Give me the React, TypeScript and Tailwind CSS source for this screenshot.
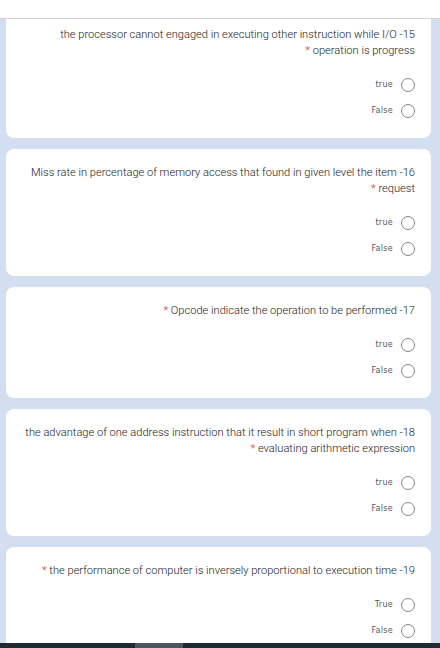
import React from 'react';

type Question = {
  lines: React.ReactNode[];
  options: string[];
  first?: boolean;
};

const Star = () => <span className="text-[#d93025]">*</span>;

const questions: Question[] = [
  {
    first: true,
    lines: [
      'the processor cannot engaged in executing other instruction while I/O -15',
      <><Star /> operation is progress</>,
    ],
    options: ['true', 'False'],
  },
  {
    lines: [
      'Miss rate in percentage of memory access that found in given level the item -16',
      <><Star /> request</>,
    ],
    options: ['true', 'False'],
  },
  {
    lines: [<><Star /> Opcode indicate the operation to be performed -17</>],
    options: ['true', 'False'],
  },
  {
    lines: [
      'the advantage of one address instruction that it result in short program when -18',
      <><Star /> evaluating arithmetic expression</>,
    ],
    options: ['true', 'False'],
  },
  {
    lines: [<><Star /> the performance of computer is inversely proportional to execution time -19</>],
    options: ['True', 'False'],
  },
];

function Radio({ label }: { label: string }) {
  return (
    <div className="flex h-[26px] items-center justify-end gap-[8px]">
      <span className="text-[8px] text-[#55595e] font-['DejaVu_Sans',sans-serif] tracking-[0.3px]">{label}</span>
      <span className="h-[14px] w-[14px] rounded-full border border-[#80868b]" />
    </div>
  );
}

function QuestionCard({ q }: { q: Question }) {
  return (
    <div
      className={
        q.first
          ? 'bg-white rounded-b-lg pt-[8px] pb-[14px] px-[16px]'
          : 'bg-white rounded-lg pt-[16px] pb-[14px] px-[16px]'
      }
    >
      <div className="text-right text-[11.1px] leading-[16px] font-light text-[#202124] font-['Roboto',sans-serif] whitespace-nowrap">
        {q.lines.map((l, i) => (
          <div key={i}>{l}</div>
        ))}
      </div>
      <div className="mt-[13px] flex flex-col">
        {q.options.map((o) => (
          <Radio key={o} label={o} />
        ))}
      </div>
    </div>
  );
}

export default function App() {
  return (
    <div className="relative h-[648px] w-[440px] overflow-hidden bg-[#d3dff0]">
      <div className="h-[19px] bg-white border-b border-[#d0d3d8]" />
      <div className="flex flex-col gap-[11px] pl-[6px] pr-[9px]">
        {questions.map((q, i) => (
          <QuestionCard key={i} q={q} />
        ))}
      </div>
      {/* taskbar strip overlaying the bottom */}
      <div className="absolute bottom-0 left-0 right-0 flex h-[5px] bg-[#1e2b30]">
        <div className="ml-[135px] w-[48px] bg-[#4d575b]" />
      </div>
    </div>
  );
}
